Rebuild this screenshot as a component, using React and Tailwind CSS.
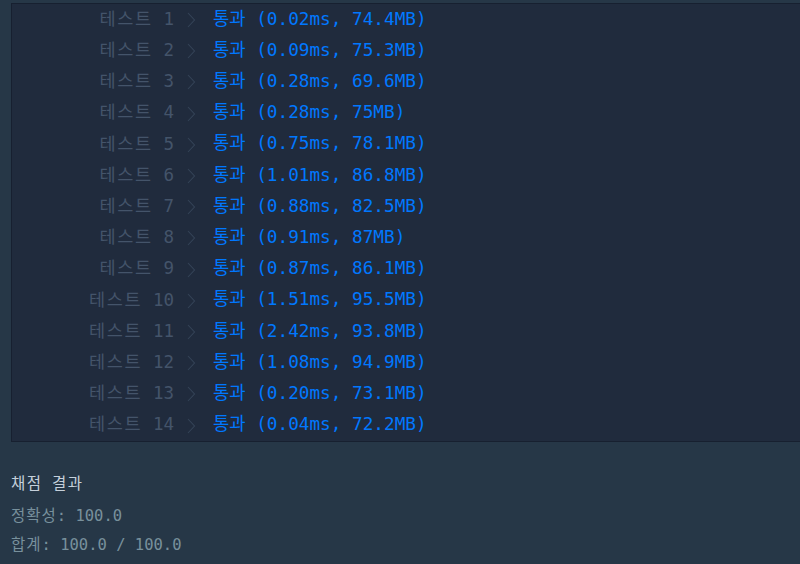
const results = [
  ['1', '0.02ms, 74.4MB'],
  ['2', '0.09ms, 75.3MB'],
  ['3', '0.28ms, 69.6MB'],
  ['4', '0.28ms, 75MB'],
  ['5', '0.75ms, 78.1MB'],
  ['6', '1.01ms, 86.8MB'],
  ['7', '0.88ms, 82.5MB'],
  ['8', '0.91ms, 87MB'],
  ['9', '0.87ms, 86.1MB'],
  ['10', '1.51ms, 95.5MB'],
  ['11', '2.42ms, 93.8MB'],
  ['12', '1.08ms, 94.9MB'],
  ['13', '0.20ms, 73.1MB'],
  ['14', '0.04ms, 72.2MB'],
];

const mono = "font-['DejaVu_Sans_Mono','Noto_Sans_CJK_KR',monospace]";

function Chevron() {
  return (
    <svg width="9" height="16" viewBox="0 0 9 16" fill="none" className="mt-[1px]">
      <path d="M1 1 L7.5 8 L1 15" stroke="#344357" strokeWidth="1.1" />
    </svg>
  );
}

export default function App() {
  return (
    <div className={`h-[564px] w-[800px] overflow-hidden bg-[#263747] pt-[3px] ${mono}`}>
      {/* Result table */}
      <div className="ml-[11px] border border-r-0 border-[#172030] bg-[#202b3d]">
        {results.map(([n, detail]) => (
          <div key={n} className="flex h-[31.2px] items-center text-[17.5px] leading-none">
            <div className="w-[162px] text-right text-[#44546a]">
              <span className="tracking-[1.7px]">테스트</span> {n}
            </div>
            <div className="flex w-[39px] pl-[13px]">
              <Chevron />
            </div>
            <div className="text-[17.7px] text-[#0078ff]">통과 ({detail})</div>
          </div>
        ))}
      </div>

      {/* Summary */}
      <div className="px-[11px] pt-[35px] text-[15.5px] leading-none">
        <div className="text-[#c5d0db]">
          <span className="tracking-[1.5px]">채점</span> <span className="tracking-[1.5px]">결과</span>
        </div>
        <div className="mt-[17px] text-[#78909c]">
          <span className="tracking-[1px]">정확성</span>: 100.0
        </div>
        <div className="mt-[13px] text-[#78909c]">
          <span className="tracking-[1px]">합계</span>: 100.0 / 100.0
        </div>
      </div>
    </div>
  );
}
